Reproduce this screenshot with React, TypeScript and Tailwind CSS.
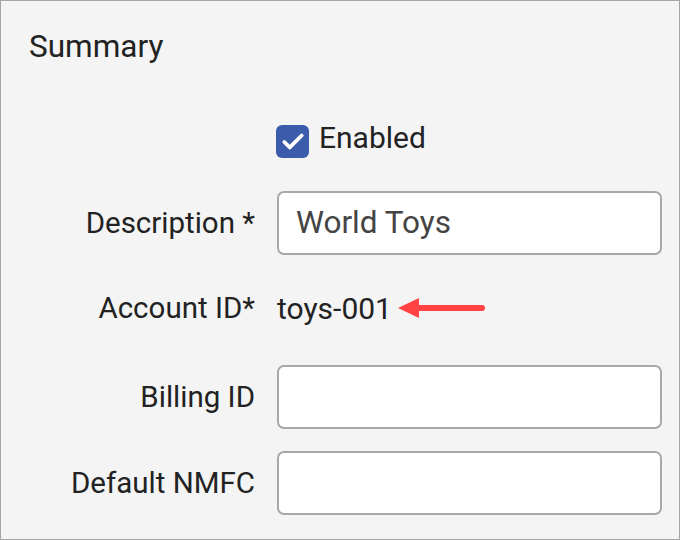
import { Check } from 'lucide-react';

function FieldRow({ label, children, tall = false }: { label: string; children: React.ReactNode; tall?: boolean }) {
  return (
    <div className={`flex items-center gap-[22px] ${tall ? 'h-[66px] pb-[4px]' : 'h-[64px]'}`}>
      <div className="w-[254px] text-right text-[29.5px] text-[#222]">{label}</div>
      {children}
    </div>
  );
}

function TextBox({ value = '' }: { value?: string }) {
  return (
    <div className="flex items-center w-[385px] h-[64px] bg-white border-2 border-[#a8a8a8] rounded-[7px] pl-[17px] text-[31.5px] text-[#444]">
      {value}
    </div>
  );
}

export default function App() {
  return (
    <div
      className="h-[540px] w-[680px] border border-[#a6a6a6] bg-[#f4f4f4]"
      style={{ fontFamily: 'Roboto, "Noto Sans", sans-serif' }}
    >
      <div className="pl-[28px] pt-[28px] h-[36px] box-content text-[31.5px] leading-[36px] text-[#222]">Summary</div>

      <div className="flex items-start h-[33px] mt-[60px] pl-[275px] gap-[10px]">
        <div className="w-[33px] h-[33px] rounded-[6px] bg-[#3b5bab] flex items-center justify-center">
          <Check size={26} strokeWidth={3.5} className="text-white" />
        </div>
        <span className="text-[30px] leading-[26px] text-[#222]">Enabled</span>
      </div>

      <div className="flex flex-col gap-[22px] mt-[33px]">
        <FieldRow label="Description *">
          <TextBox value="World Toys" />
        </FieldRow>
        <FieldRow label="Account ID*" tall>
          <div className="flex items-center gap-[6px]">
            <span className="text-[30px] text-[#222]">toys-001</span>
            <svg width="88" height="22" viewBox="0 0 88 22">
              <polygon points="0,11 21,1 21,21" fill="#ff4343" />
              <line x1="19" y1="11" x2="84" y2="11" stroke="#ff4343" strokeWidth="6" strokeLinecap="round" />
            </svg>
          </div>
        </FieldRow>
        <FieldRow label="Billing ID">
          <TextBox />
        </FieldRow>
        <FieldRow label="Default NMFC">
          <TextBox />
        </FieldRow>
      </div>
    </div>
  );
}
